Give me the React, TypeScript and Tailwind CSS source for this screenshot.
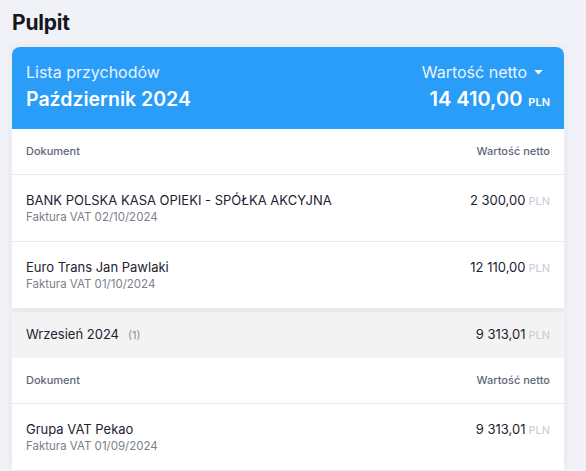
import React from 'react';

interface Row {
  name: string;
  doc: string;
  amount: string;
}

const october: Row[] = [
  { name: 'BANK POLSKA KASA OPIEKI - SPÓŁKA AKCYJNA', doc: 'Faktura VAT 02/10/2024', amount: '2 300,00' },
  { name: 'Euro Trans Jan Pawlaki', doc: 'Faktura VAT 01/10/2024', amount: '12 110,00' }
];

const september: Row[] = [
  { name: 'Grupa VAT Pekao', doc: 'Faktura VAT 01/09/2024', amount: '9 313,01' }
];

const TableHead: React.FC = () => <div className="flex items-center justify-between h-[46px] px-[14px] border-b border-[#e6e9ef] text-[11px] font-medium text-[#5f6878]">
    <span>Dokument</span>
    <span>Wartość netto</span>
  </div>;

const DocRow: React.FC<{ row: Row; last?: boolean }> = ({ row, last }) => <div className={`flex justify-between px-[14px] pt-[16px] ${last ? 'h-[66px]' : 'h-[67px] border-b border-[#e6e9ef]'}`}>
    <div className="flex flex-col">
      <span className="text-[13px] leading-[18px] text-[#1d2230]">{row.name}</span>
      <span className="text-[11.5px] leading-[17px] text-[#7b818c]">{row.doc}</span>
    </div>
    <div className="text-[13px] leading-[18px] text-[#1d2230]">
      {row.amount}<span className="ml-[3px] text-[11px] text-[#c5ccd8]">PLN</span>
    </div>
  </div>;

const App: React.FC = () => {
  return <div className="min-h-[471px] bg-[#f0f2f7] px-[12px] pt-[9px] pb-[4px]" style={{ fontFamily: 'Inter, "Noto Sans", sans-serif' }}>
      <h1 className="text-[21px] leading-[27px] font-bold text-[#14161c] mb-[11px] tracking-[-0.01em]">Pulpit</h1>
      <div className="w-[552px] flex flex-col gap-[4px]">
        <div className="bg-white rounded-t-[8px] shadow-[0_0_8px_rgba(30,40,70,0.06)] overflow-hidden">
          <div className="bg-[#2a9df8] h-[82px] px-[14px] pt-[14px] flex justify-between text-white">
            <div className="flex flex-col">
              <span className="text-[16px] leading-[23px] text-[#e8f4ff]">Lista przychodów</span>
              <span className="text-[19.5px] leading-[28px] font-semibold mt-[1px]">Październik 2024</span>
            </div>
            <div className="flex flex-col items-end">
              <span className="flex items-center text-[16px] leading-[23px] text-[#e8f4ff]">
                Wartość netto
                <svg width="9" height="5" viewBox="0 0 10 6" className="ml-[7px] mr-[7px]">
                  <path d="M0 0h10L5 5.5z" fill="#ffffff" />
                </svg>
              </span>
              <span className="text-[20px] leading-[28px] font-semibold mt-[1px]">
                14 410,00<span className="ml-[6px] text-[11px] font-semibold">PLN</span>
              </span>
            </div>
          </div>
          <TableHead />
          {october.map((r, i) => <DocRow key={r.doc} row={r} last={i === october.length - 1} />)}
        </div>
        <div className="bg-white shadow-[0_0_8px_rgba(30,40,70,0.06)]">
          <div className="bg-[#f3f3f4] h-[46px] px-[14px] flex items-center justify-between">
            <span className="text-[13px] text-[#1d2230]">
              Wrzesień 2024<span className="ml-[9px] text-[11px] text-[#8a909b]">(1)</span>
            </span>
            <span className="text-[13px] text-[#1d2230]">
              9 313,01<span className="ml-[3px] text-[11px] text-[#c5ccd8]">PLN</span>
            </span>
          </div>
          <TableHead />
          {september.map(r => <DocRow key={r.doc} row={r} last />)}
        </div>
      </div>
    </div>;
};

export default App;
